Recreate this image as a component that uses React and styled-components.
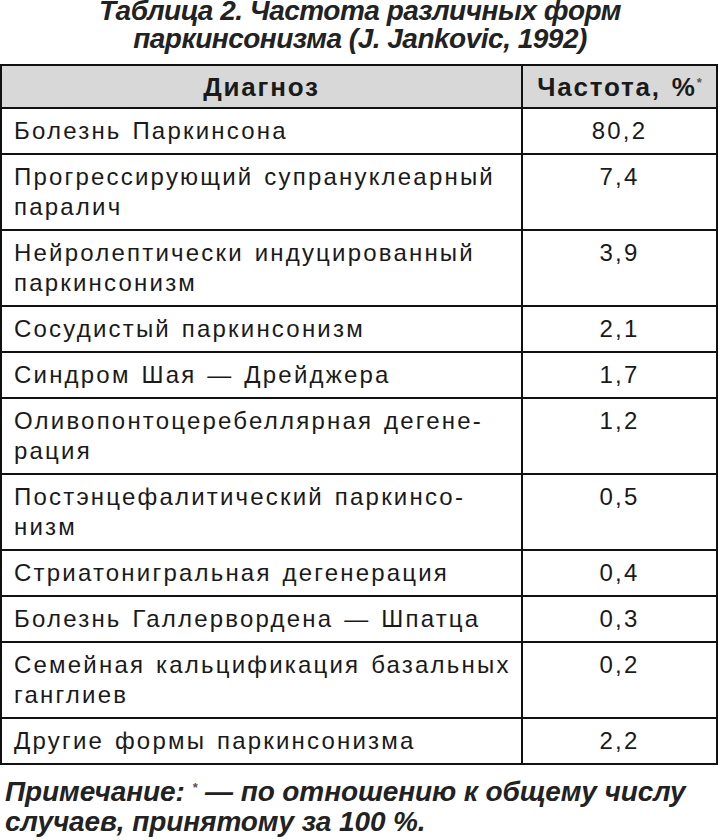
import { createGlobalStyle, styled } from "styled-components";

const Global = createGlobalStyle`
  body {
    margin: 0;
    background: #fff;
    font-family: "Liberation Sans", Arial, sans-serif;
    color: #1a1a1a;
  }
`;

const Page = styled.div`
  width: 720px;
  height: 840px;
  overflow: hidden;
  background: #fff;
`;

const Title = styled.h2`
  margin: -3px 0 0;
  font-size: 28px;
  line-height: 28px;
  font-weight: bold;
  font-style: italic;
  text-align: center;
  letter-spacing: -0.5px;
  color: #222;
`;

const Table = styled.table`
  margin-top: 11px;
  width: 718px;
  table-layout: fixed;
  border-collapse: collapse;
  font-size: 24px;
  letter-spacing: 2.2px;
  word-spacing: 2px;

  td, th {
    border: 2px solid #111;
    padding: 7px 12px;
    line-height: 30px;
    vertical-align: top;
  }
`;

const Row = styled.tr`
  height: ${(p) => (p.$double ? 76 : 46)}px;
`;

const Head = styled.th`
  background: #d8d8d8;
  font-weight: bold;
  font-size: 26px;
  text-align: center;
  letter-spacing: 1.8px;
  && {
    padding: 6px 0 5px;
  }
`;

const Sup = styled.sup`
  font-size: 13px;
  line-height: 0;
  vertical-align: 9px;
  color: #555;
  letter-spacing: 0;
`;

const Cell = styled.td`
  text-align: ${(p) => (p.$center ? "center" : "left")};
  white-space: pre;
`;

const Note = styled.p`
  margin: 12px 0 0 5px;
  font-size: 28px;
  line-height: 30px;
  font-weight: bold;
  font-style: italic;
  letter-spacing: -0.1px;
  color: #222;
`;

const rows = [
  ["Болезнь Паркинсона", "80,2"],
  ["Прогрессирующий супрануклеарный\nпаралич", "7,4"],
  ["Нейролептически индуцированный\nпаркинсонизм", "3,9"],
  ["Сосудистый паркинсонизм", "2,1"],
  ["Синдром Шая — Дрейджера", "1,7"],
  ["Оливопонтоцеребеллярная дегене-\nрация", "1,2"],
  ["Постэнцефалитический паркинсо-\nнизм", "0,5"],
  ["Стриатонигральная дегенерация", "0,4"],
  ["Болезнь Галлервордена — Шпатца", "0,3"],
  ["Семейная кальцификация базальных\nганглиев", "0,2"],
  ["Другие формы паркинсонизма", "2,2"],
];

export default function App() {
  return (
    <Page>
      <Global />
      <Title>
        Таблица 2. Частота различных форм
        <br />
        паркинсонизма (J. Jankovic, 1992)
      </Title>
      <Table>
        <colgroup>
          <col style={{ width: "521px" }} />
          <col />
        </colgroup>
        <thead>
          <tr>
            <Head>Диагноз</Head>
            <Head>
              Частота, %<Sup>*</Sup>
            </Head>
          </tr>
        </thead>
        <tbody>
          {rows.map(([name, val]) => (
            <Row key={name} $double={name.includes("\n")}>
              <Cell>{name}</Cell>
              <Cell $center>{val}</Cell>
            </Row>
          ))}
        </tbody>
      </Table>
      <Note>
        Примечание: <Sup>*</Sup> — по отношению к общему числу
        <br />
        случаев, принятому за 100 %.
      </Note>
    </Page>
  );
}
